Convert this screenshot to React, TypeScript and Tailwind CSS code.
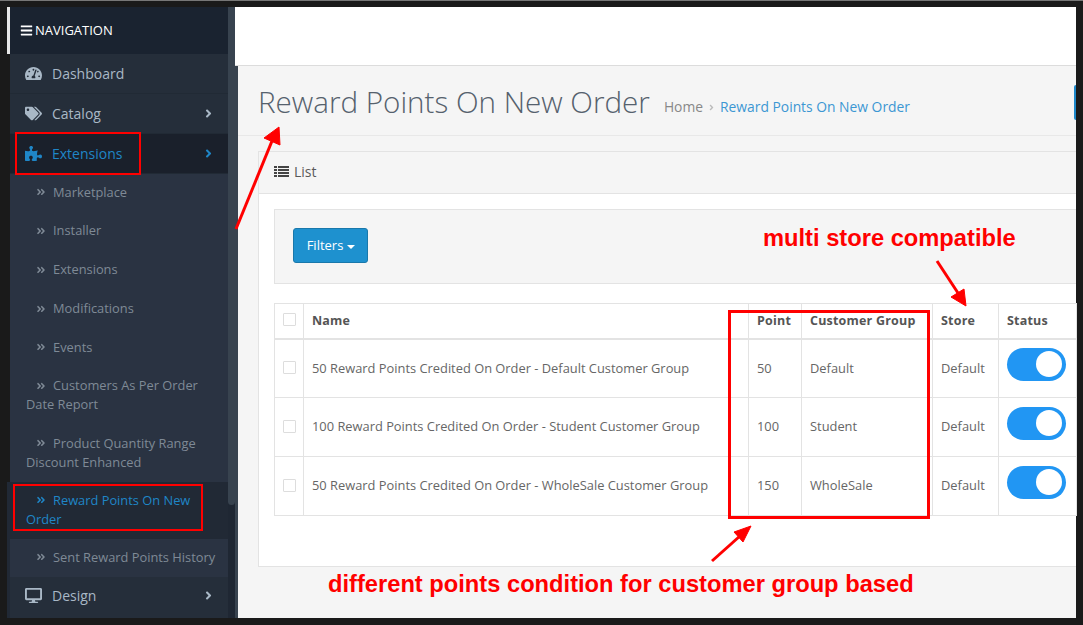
import { FaAngleDoubleRight, FaAngleRight, FaBars, FaDesktop, FaPuzzlePiece, FaTachometerAlt, FaTags } from 'react-icons/fa';

const SUB_ITEMS = [
  { first: 'Marketplace', h: 'h-[38px]' },
  { first: 'Installer', h: 'h-[39px]' },
  { first: 'Extensions', h: 'h-[39px]' },
  { first: 'Modifications', h: 'h-[39px]' },
  { first: 'Events', h: 'h-[38px]' },
  { first: 'Customers As Per Order', rest: 'Date Report', h: 'h-[58px]' },
  { first: 'Product Quantity Range', rest: 'Discount Enhanced', h: 'h-[57px]' },
];

const ROWS = [
  { name: '50 Reward Points Credited On Order - Default Customer Group', point: '50', group: 'Default' },
  { name: '100 Reward Points Credited On Order - Student Customer Group', point: '100', group: 'Student' },
  { name: '50 Reward Points Credited On Order - WholeSale Customer Group', point: '150', group: 'WholeSale' },
];

function NavRow({ icon, label, arrow, active, h = 'h-[40px]' }: { icon: React.ReactNode; label: string; arrow?: boolean; active?: boolean; h?: string }) {
  return (
    <div className={`${h} flex items-center pl-[15px] pr-[13px] border-b border-[#212a35] text-[14px] ${active ? 'bg-[#1a202b] text-[#1f86c7]' : 'bg-[#252e3a] text-[#a9b8c6]'}`}>
      <span className="w-[27px] flex text-[17px]">{icon}</span>
      <span className="flex-1">{label}</span>
      {arrow && <FaAngleRight className="text-[13px]" />}
    </div>
  );
}

function SubRow({ first, rest, h, active, dark }: { first: string; rest?: string; h: string; active?: boolean; dark?: boolean }) {
  return (
    <div className={`${h} flex flex-col justify-center pl-[16px] pb-[2px] text-[12.85px] leading-[19px] ${active ? 'text-[#1f86c7]' : 'text-[#7f8a96]'} ${dark ? 'bg-[#212935]' : 'bg-[#2a3342]'}`}>
      <div className="flex items-center">
        <FaAngleDoubleRight className="text-[10px] ml-[10px] mr-[17px]" />
        <span className="whitespace-nowrap -ml-[10px]">{first}</span>
      </div>
      {rest && <div>{rest}</div>}
    </div>
  );
}

function Toggle() {
  return (
    <div className="w-[59px] h-[33px] -mt-[8px] rounded-full bg-[#2196f3] flex items-center justify-end pr-[4px]">
      <div className="w-[26px] h-[26px] rounded-full bg-white" />
    </div>
  );
}

function Checkbox() {
  return <div className="w-[13px] h-[13px] mx-auto -mt-[2px] border border-[#dddddd] bg-white rounded-[1px]" />;
}

export default function App() {
  return (
    <div className="relative w-[1083px] h-[625px] overflow-hidden bg-[#1a1a1a] border-t border-[#777777] pt-[6px] pl-[7px] pr-[7px] pb-[7px] flex font-['Open_Sans',sans-serif]">
      <aside className="w-[228px] h-[611px] flex shrink-0 overflow-hidden">
        <div className="w-[221px] shrink-0 flex flex-col">
          <div className="h-[47px] shrink-0 bg-[#1a2330] border-l-[3px] border-[#e8e8e8] flex items-center pl-[10px] text-white text-[13px]">
            <FaBars className="text-[13px] mr-[2px]" />
            NAVIGATION
          </div>
          <div className="pl-[3px] flex flex-col">
            <NavRow icon={<FaTachometerAlt />} label="Dashboard" />
            <NavRow icon={<FaTags />} label="Catalog" arrow />
            <NavRow icon={<FaPuzzlePiece />} label="Extensions" arrow active />
            {SUB_ITEMS.map((item) => (
              <SubRow key={item.first} {...item} />
            ))}
          </div>
          <div className="flex flex-col">
            <div className="border-l-[3px] border-[#212935]">
              <SubRow first="Reward Points On New" rest="Order" h="h-[57px]" active dark />
            </div>
            <div className="border-l-[3px] border-[#212935]">
              <SubRow first="Sent Reward Points History" h="h-[38px]" />
            </div>
            <div className="border-l-[3px] border-[#212935]">
              <NavRow icon={<FaDesktop />} label="Design" arrow h="h-[42px] pb-[5px]" />
            </div>
          </div>
        </div>
        <div className="flex-1 bg-[#1f2733]">
          <div className="h-[498px] bg-[#38434f] rounded-b-[4px]" />
        </div>
      </aside>

      <main className="flex-1 min-w-0 flex flex-col relative">
        <div className="h-[59px] shrink-0 bg-white border-b border-[#dcdcdc]" />
        <div className="flex-1 flex">
          <div className="w-[3px] shrink-0 bg-[#38434f]" />
          <div className="flex-1 min-w-0 bg-[#f5f5f5] flex flex-col">
            <div className="h-[70px] shrink-0 border-b border-[#e8e8e8] flex items-center pl-[20px] relative">
              <h1 className="text-[29.6px] font-light text-[#55616d] leading-none whitespace-nowrap mt-[2px]">Reward Points On New Order</h1>
              <div className="ml-[14px] mt-[14px] flex items-center text-[13.85px] whitespace-nowrap">
                <span className="text-[#888888]">Home</span>
                <FaAngleRight className="text-[9px] text-[#bbbbbb] mx-[4px]" />
                <span className="text-[#3c97d3]">Reward Points On New Order</span>
              </div>
              <div className="absolute right-0 top-[19px] w-[2px] h-[35px] bg-[#1e88c9] rounded-l-[2px]" />
            </div>
            <div className="ml-[20px] mt-[15px] h-[416px] bg-white border border-r-0 border-[#e3e3e3] flex flex-col">
              <div className="h-[42px] shrink-0 bg-[#f5f5f5] border-b border-[#e3e3e3] flex items-center pl-[15px] pb-[2px] text-[14px] text-[#595959]">
                <svg className="mr-[5px] text-[#444444]" width="15" height="11" viewBox="0 0 15 11" fill="currentColor">
                  <rect x="0" y="0" width="3" height="2" />
                  <rect x="4" y="0" width="11" height="2" />
                  <rect x="0" y="3" width="3" height="2" />
                  <rect x="4" y="3" width="11" height="2" />
                  <rect x="0" y="6" width="3" height="2" />
                  <rect x="4" y="6" width="11" height="2" />
                  <rect x="0" y="9" width="3" height="2" />
                  <rect x="4" y="9" width="11" height="2" />
                </svg>
                List
              </div>
              <div className="pl-[15px] pt-[15px]">
                <div className="h-[75px] bg-[#f5f5f5] border border-r-0 border-[#e3e3e3] flex items-center pl-[18px]">
                  <button className="w-[75px] h-[35px] mb-[2px] pt-[1px] pl-[1px] rounded-[3px] bg-[#1e91cf] border border-[#1978ab] text-white text-[13px] flex items-center justify-center">
                    Filters
                    <span className="ml-[4px] mt-[2px] border-x-[4px] border-x-transparent border-t-[4px] border-t-white" />
                  </button>
                </div>
                <table className="mt-[19px] w-[802px] table-fixed border-collapse text-[12.87px] text-[#666666]">
                  <colgroup>
                    <col className="w-[29px]" />
                    <col className="w-[445px]" />
                    <col className="w-[53px]" />
                    <col className="w-[131px]" />
                    <col className="w-[66px]" />
                    <col className="w-[78px]" />
                  </colgroup>
                  <thead>
                    <tr className="h-[35px]">
                      <th className="border border-[#e3e3e3] border-b-2"><Checkbox /></th>
                      {['Name', 'Point', 'Customer Group', 'Store', 'Status'].map((label) => (
                        <th key={label} className="border border-[#e3e3e3] border-b-2 px-[8px] pt-[2px] text-left font-bold text-[#555555] text-[12.5px] tracking-[0.2px] whitespace-nowrap">{label}</th>
                      ))}
                    </tr>
                  </thead>
                  <tbody>
                    {ROWS.map((row) => (
                      <tr key={row.name} className="h-[59px]">
                        <td className="border border-[#e3e3e3]"><Checkbox /></td>
                        <td className="border border-[#e3e3e3] px-[8px] whitespace-nowrap">{row.name}</td>
                        <td className="border border-[#e3e3e3] px-[8px]">{row.point}</td>
                        <td className="border border-[#e3e3e3] px-[8px]">{row.group}</td>
                        <td className="border border-[#e3e3e3] px-[8px]">Default</td>
                        <td className="border border-[#e3e3e3] pl-[8px]"><Toggle /></td>
                      </tr>
                    ))}
                  </tbody>
                </table>
              </div>
            </div>
          </div>
        </div>
      </main>

      {/* red annotations on top of the screenshot */}
      <div className="absolute left-[15px] top-[131px] w-[126px] h-[43px] border-2 border-[#ff0000]" />
      <div className="absolute left-[13px] top-[483px] w-[190px] h-[47px] border-2 border-[#ff0000]" />
      <div className="absolute left-[728px] top-[309px] w-[202px] h-[209px] border-[3px] border-[#ff0000]" />
      <div className="absolute left-[763px] top-[223px] text-[23.7px] leading-[28px] font-bold text-[#ff0000] font-['Liberation_Sans',sans-serif] whitespace-nowrap">multi store compatible</div>
      <div className="absolute left-[328px] top-[569px] text-[23.7px] leading-[28px] font-bold text-[#ff0000] font-['Liberation_Sans',sans-serif] whitespace-nowrap">different points condition for customer group based</div>
      <svg className="absolute left-0 top-0 pointer-events-none" width="1083" height="625" viewBox="0 0 1083 625">
        <g fill="#ff0000" stroke="#ff0000">
          <line x1="236" y1="228" x2="272" y2="140" strokeWidth="3" />
          <polygon points="279,126 280,144 264,137" />
          <line x1="937" y1="260" x2="958" y2="292" strokeWidth="3" />
          <polygon points="966,305 951,296 964,288" />
          <line x1="712" y1="560" x2="740" y2="535" strokeWidth="3" />
          <polygon points="751,525 743,541 734,531" />
        </g>
      </svg>
    </div>
  );
}
